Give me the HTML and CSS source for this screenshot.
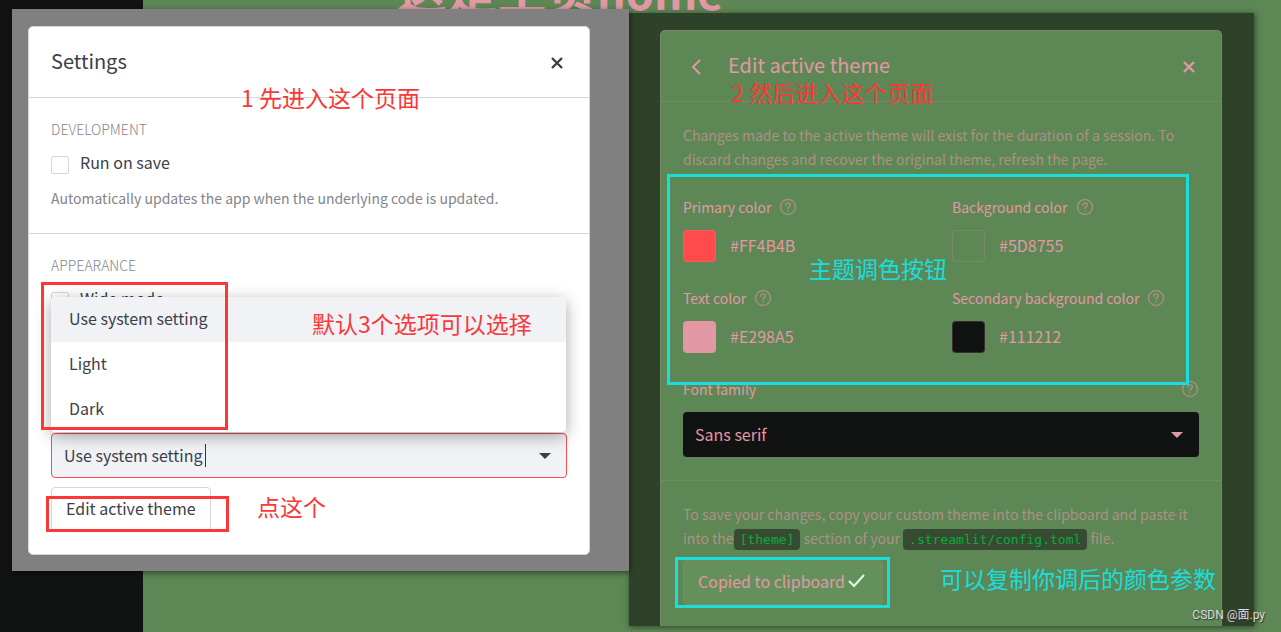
FILE: index.html
```html
<!DOCTYPE html>
<html lang="zh-CN">
<head>
    <meta charset="UTF-8">
    <meta name="viewport" content="width=device-width, initial-scale=1.0">
    <title>Streamlit - Edit active theme</title>
    <link rel="stylesheet" href="styles.css">
</head>
<body>
    <div class="app">
        <aside class="sidebar"></aside>
        <main class="content">
            <h1>这是主页<span class="latin">home</span></h1>
        </main>
    </div>

    <div class="windows">
        <section class="window window-light">
            <div class="dialog">
                <header class="dialog-header">
                    <h2>Settings</h2>
                    <button class="icon-button" type="button" aria-label="Close">
                        <svg width="14" height="14" viewBox="0 0 14 14"><path d="M2 2L12 12M12 2L2 12" fill="none" stroke="currentColor" stroke-width="2.4"/></svg>
                    </button>
                </header>
                <div class="section section-first">
                    <h3>DEVELOPMENT</h3>
                    <label class="check"><input type="checkbox"> Run on save</label>
                    <p class="caption">Automatically updates the app when the underlying code is updated.</p>
                </div>
                <div class="section">
                    <h3>APPEARANCE</h3>
                    <label class="check"><input type="checkbox"> Wide mode</label>
                    <div class="combo">
                        <ul class="menu" role="listbox" aria-label="Theme">
                            <li class="active" role="option" aria-selected="true">Use system setting</li>
                            <li role="option">Light</li>
                            <li role="option">Dark</li>
                        </ul>
                        <div class="combo-box">
                            <input type="text" role="combobox" aria-label="Theme" aria-expanded="true" value="Use system setting">
                            <span class="caret"></span>
                            <svg class="arrow" width="12" height="6" viewBox="0 0 12 6"><path d="M0 0H12L6 6Z" fill="currentColor"/></svg>
                        </div>
                    </div>
                    <button class="button" type="button">Edit active theme</button>
                </div>
            </div>
        </section>

        <section class="window window-green">
            <div class="dialog">
                <header class="dialog-header">
                    <button class="icon-button back" type="button" aria-label="Back">
                        <svg width="12" height="18" viewBox="0 0 12 18"><path d="M10 2L3 9L10 16" fill="none" stroke="currentColor" stroke-width="2"/></svg>
                    </button>
                    <h2>Edit active theme</h2>
                    <button class="icon-button" type="button" aria-label="Close">
                        <svg width="14" height="14" viewBox="0 0 14 14"><path d="M2 2L12 12M12 2L2 12" fill="none" stroke="currentColor" stroke-width="2.4"/></svg>
                    </button>
                </header>
                <div class="section section-first">
                    <p class="caption">Changes made to the active theme will exist for the duration of a session. To discard changes and recover the original theme, refresh the page.</p>
                    <div class="colors">
                        <div class="color">
                            <div class="label-row">
                                <label for="primary">Primary color</label>
                                <svg class="help" width="18" height="18" viewBox="0 0 18 18"><use href="#help"/></svg>
                            </div>
                            <div class="swatch"><input type="color" id="primary" value="#ff4b4b"><span>#FF4B4B</span></div>
                        </div>
                        <div class="color">
                            <div class="label-row">
                                <label for="background">Background color</label>
                                <svg class="help" width="18" height="18" viewBox="0 0 18 18"><use href="#help"/></svg>
                            </div>
                            <div class="swatch"><input type="color" id="background" value="#5d8755"><span>#5D8755</span></div>
                        </div>
                        <div class="color">
                            <div class="label-row">
                                <label for="text">Text color</label>
                                <svg class="help" width="18" height="18" viewBox="0 0 18 18"><use href="#help"/></svg>
                            </div>
                            <div class="swatch"><input type="color" id="text" value="#e298a5"><span>#E298A5</span></div>
                        </div>
                        <div class="color">
                            <div class="label-row">
                                <label for="secondary">Secondary background color</label>
                                <svg class="help" width="18" height="18" viewBox="0 0 18 18"><use href="#help"/></svg>
                            </div>
                            <div class="swatch"><input type="color" id="secondary" value="#111212"><span>#111212</span></div>
                        </div>
                    </div>
                    <div class="label-row spread">
                        <label for="font">Font family</label>
                        <svg class="help" width="18" height="18" viewBox="0 0 18 18"><use href="#help"/></svg>
                    </div>
                    <div class="select">
                        <select id="font">
                            <option>Sans serif</option>
                        </select>
                        <svg class="arrow" width="12" height="6" viewBox="0 0 12 6"><path d="M0 0H12L6 6Z" fill="currentColor"/></svg>
                    </div>
                </div>
                <div class="section">
                    <p class="caption">To save your changes, copy your custom theme into the clipboard and paste it into the<code>[theme]</code> section of your <code>.streamlit/config.toml</code> file.</p>
                    <button class="button" type="button">Copied to clipboard
                        <svg width="17" height="14" viewBox="0 0 17 14"><path d="M1 7L6 12L16 1" fill="none" stroke="#dfffe6" stroke-width="2"/></svg>
                    </button>
                </div>
            </div>
        </section>
    </div>

    <!-- notes drawn over the windows -->
    <div class="frame red frame-options"></div>
    <div class="frame red frame-edit"></div>
    <div class="frame cyan frame-colors"></div>
    <div class="frame cyan frame-copy"></div>
    <p class="note note-red note-step1">1 先进入这个页面</p>
    <p class="note note-red note-step2">2 然后进入这个页面</p>
    <p class="note note-red note-options">默认3个选项可以选择</p>
    <p class="note note-red note-click">点这个</p>
    <p class="note note-cyan note-colors">主题调色按钮</p>
    <p class="note note-cyan note-copy">可以复制你调后的颜色参数</p>
    <p class="watermark">CSDN @面.py</p>

    <svg class="defs" width="0" height="0">
        <symbol id="help" viewBox="0 0 18 18">
            <g fill="none" stroke="currentColor" stroke-width="1.5" stroke-linecap="round">
                <circle cx="9" cy="9" r="7.5"/>
                <path d="M6.8 7.2C6.8 4.3 11.3 4.4 11.3 7.1C11.3 8.8 9 9 9 10.4M9 12.8V12.9"/>
            </g>
        </symbol>
    </svg>
</body>
</html>
```
FILE: styles.css
```css
* {
    box-sizing: border-box;
}
body {
    margin: 0;
    position: relative;
    height: 100vh;
    overflow: hidden;
    font-family: "Noto Sans CJK SC", sans-serif;
    font-size: 16px;
    line-height: 24px;
    background-color: #5d8755;
}
h1, h2, h3, p, ul {
    margin: 0;
    padding: 0;
    font-weight: 400;
}
button, input, select {
    font: inherit;
    color: inherit;
    margin: 0;
}

/* app behind the windows */
.app {
    display: flex;
    height: 100%;
}
.sidebar {
    width: 143px;
    background-color: #111212;
}
.content {
    flex: 1;
}
h1 {
    margin-top: -42px;
    padding-left: 254px;
    color: #e298a5;
    font-size: 50px;
    font-weight: 700;
    line-height: 60px;
}
.latin {
    font-size: 45px;
}

/* windows */
.windows {
    position: absolute;
    inset: 0;
    display: grid;
    grid-template-columns: 617fr 625fr;
    align-items: start;
    padding: 9px 27px 6px 12px;
}
.window-light {
    position: relative;
    z-index: 1;
    padding: 17px 39px 16px 16px;
    background-color: #808080;
    box-shadow: 1px 2px 6px rgba(0, 0, 0, 0.5);
    color: #3c3e49;
}
.window-green {
    align-self: stretch;
    display: flex;
    margin-top: 4px;
    padding: 17px 32px 0 31px;
    background-color: #2e422a;
    box-shadow: 1px 1px 6px rgba(0, 0, 0, 0.5);
    color: #e298a5;
}
.dialog {
    flex: 1;
    border: 1px solid #d6d6d9;
    border-radius: 5px;
    background-color: #fff;
}
.window-green .dialog {
    border-color: #788a65;
    border-bottom: 0;
    border-radius: 5px 5px 0 0;
    background-color: #5d8755;
}
.dialog-header {
    display: flex;
    align-items: center;
    height: 70px;
    padding: 0 22px;
}
.dialog-header h2 {
    flex: 1;
    padding-bottom: 2px;
    font-size: 20px;
}
.icon-button {
    display: flex;
    padding: 4px 3px 3px;
    border: 0;
    background: none;
}
.back {
    margin: 0 23px 0 4px;
}
.section {
    padding: 21px 22px 22px;
    border-top: 1px solid #d6d6d9;
}
.section-first {
    padding-bottom: 23px;
}
.window-light .section {
    padding-top: 19px;
}
.window-green .section {
    border-color: #788a65;
}
h3 {
    color: #83848c;
    font-size: 14px;
    font-weight: 300;
}
.caption {
    color: #83848c;
    font-size: 14px;
}
.window-light .caption {
    margin-top: 12px;
}
.window-green .caption {
    color: #ad9185;
}
.check {
    display: flex;
    align-items: center;
    gap: 11px;
    margin-top: 9px;
}
.check input {
    appearance: none;
    width: 18px;
    height: 18px;
    margin-top: 6px;
    border: 1px solid #d6d6d9;
    border-radius: 2px;
    background-color: #fff;
}

/* theme drop-down */
.combo {
    position: relative;
    margin-top: 123px;
}
.combo-box {
    display: flex;
    align-items: center;
    height: 45px;
    padding: 0 15px 0 12px;
    border: 1px solid #ff4b4b;
    border-radius: 4px;
    background-color: #f0f2f6;
}
.combo-box input {
    width: 141px;
    padding: 0 0 2px;
    border: 0;
    outline: 0;
    background: none;
}
.caret {
    width: 1px;
    height: 23px;
    background-color: #31333f;
}
.arrow {
    margin-left: auto;
}
.menu {
    position: absolute;
    left: 0;
    right: 1px;
    bottom: 46px;
    list-style: none;
    border-radius: 4px;
    background-color: #fff;
    box-shadow: 0 4px 16px rgba(0, 0, 0, 0.35);
}
.menu li {
    padding: 9px 18px 12px;
}
.menu .active {
    border-radius: 4px 4px 0 0;
    background-color: #f0f2f6;
}
.button {
    display: flex;
    align-items: center;
    gap: 3px;
    height: 45px;
    margin-top: 9px;
    padding: 0 14px 3px;
    border: 1px solid #d6d6d9;
    border-radius: 4px;
    background-color: #fff;
}
.window-green .button {
    margin-top: 8px;
    padding-right: 17px;
    border-color: #788a65;
    background-color: #64915b;
}
.window-green .section:last-child {
    padding-bottom: 20px;
}

/* theme colors */
.colors {
    display: grid;
    grid-template-columns: 1fr 1fr;
    gap: 24px 22px;
    margin: 24px 0;
}
.label-row {
    display: flex;
    align-items: center;
    gap: 8px;
    font-size: 14px;
}
.spread {
    justify-content: space-between;
}
.help {
    color: #a0907d;
}
.swatch {
    display: flex;
    align-items: center;
    gap: 14px;
    margin-top: 11px;
}
.swatch span {
    padding-bottom: 2px;
}
.swatch input {
    appearance: none;
    width: 33px;
    height: 32px;
    padding: 0;
    border: 0;
    background: none;
}
.swatch input::-webkit-color-swatch-wrapper {
    padding: 0;
}
.swatch input::-webkit-color-swatch {
    border: 1px solid rgba(226, 152, 165, 0.2);
    border-radius: 4px;
}
.select {
    display: flex;
    align-items: center;
    margin-top: 11px;
    padding-right: 16px;
    border-radius: 4px;
    background-color: #111212;
}
.select select {
    appearance: none;
    flex: 1;
    height: 45px;
    padding: 0 12px 2px;
    border: 0;
    background: none;
}
code {
    padding: 3px 6px;
    border-radius: 4px;
    background-color: #374b33;
    color: #09ab3b;
    font-family: "DejaVu Sans Mono", monospace;
    font-size: 13px;
}

/* notes */
.frame, .note, .watermark {
    position: absolute;
}
.frame {
    z-index: 2;
    border: 3px solid #fa3838;
}
.cyan {
    border-color: #1adede;
}
.frame-options {
    left: 41px;
    top: 282px;
    width: 187px;
    height: 148px;
}
.frame-edit {
    left: 46px;
    top: 496px;
    width: 183px;
    height: 36px;
}
.frame-colors {
    left: 667px;
    top: 174px;
    width: 522px;
    height: 211px;
}
.frame-copy {
    left: 675px;
    top: 557px;
    width: 215px;
    height: 51px;
}
.note {
    z-index: 2;
    font-size: 23px;
    line-height: 30px;
    white-space: nowrap;
}
.note-red {
    color: #fa3838;
}
.note-cyan {
    color: #1adede;
}
.note-step1 {
    left: 241px;
    top: 82px;
}
.note-step2 {
    left: 731px;
    top: 77px;
}
.note-options {
    left: 312px;
    top: 308px;
}
.note-click {
    left: 257px;
    top: 491px;
}
.note-colors {
    left: 809px;
    top: 253px;
}
.note-copy {
    left: 940px;
    top: 563px;
}
.watermark {
    right: 16px;
    bottom: 5px;
    z-index: 2;
    color: #dcdcdc;
    font-family: Roboto, "Noto Sans CJK SC", sans-serif;
    font-size: 12px;
    text-shadow: 1px 1px 1px #333;
}
.defs {
    position: absolute;
}
```
